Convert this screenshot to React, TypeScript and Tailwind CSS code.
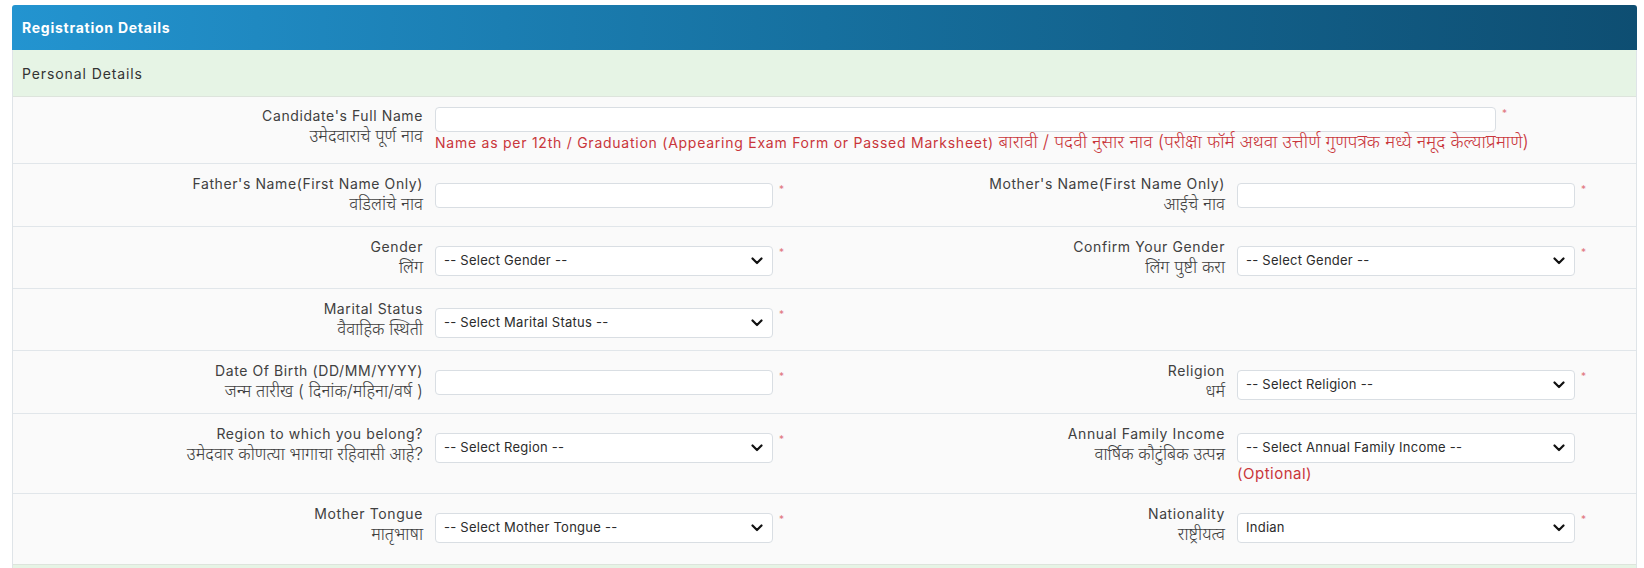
import React from "react";

const FONT = { fontFamily: '"Inter", "Noto Sans", "Noto Sans Devanagari", sans-serif' };

function Chevron() {
  return (
    <svg width="12" height="8" viewBox="0 0 12 8" className="absolute right-[9px] top-1/2 -translate-y-1/2">
      <path d="M1.5 1.5 L6 6 L10.5 1.5" fill="none" stroke="#111" strokeWidth="2.2" strokeLinecap="round" strokeLinejoin="round" />
    </svg>
  );
}

function Star() {
  return <span className="ml-[6px] mt-[1px] text-[10px] leading-none text-[#e0747a]">*</span>;
}

function TextInput({ w = "w-[338px]" }: { w?: string }) {
  return (
    <div className="flex items-start">
      <input className={`${w} h-[25px] rounded-[4px] border border-[#d9dee3] bg-white outline-none`} />
      <Star />
    </div>
  );
}

function Select({ text }: { text: string }) {
  return (
    <div className="flex items-start">
      <div className="relative w-[338px] h-[30px] rounded-[4px] border border-[#d9dee3] bg-white flex items-center pl-[8px] text-[13px] tracking-[0.25px] text-[#2b2b2b]">
        {text}
        <Chevron />
      </div>
      <Star />
    </div>
  );
}

function Label({ en, mr }: { en: string; mr: string }) {
  return (
    <div className="w-[410px] text-right text-[14px] leading-[20px] tracking-[0.6px] text-[#404040]">
      <div>{en}</div>
      <div className="text-[17px] font-light tracking-normal">{mr}</div>
    </div>
  );
}

function Half({ en, mr, children, w = "w-[802px]" }: { en: string; mr: string; children: React.ReactNode; w?: string }) {
  return (
    <div className={`${w} flex items-start`}>
      <div className="pt-[10px]">
        <Label en={en} mr={mr} />
      </div>
      <div className="ml-[12px] pt-[19px]">{children}</div>
    </div>
  );
}

function Row({ children, extra = "" }: { children: React.ReactNode; extra?: string }) {
  return <div className={`flex border-b border-[#e1e6ea] min-h-[62px] ${extra}`}>{children}</div>;
}

export default function App() {
  return (
    <div className="w-[1644px] h-[568px] overflow-hidden bg-white pt-[5px] pl-[12px]" style={FONT}>
      <div className="w-[1625px]">
        <div className="h-[45px] rounded-t-[3px] bg-linear-to-r from-[#2394d0] via-[#16709f] to-[#0e4e72] flex items-center pl-[10px]">
          <span className="text-white font-bold text-[14px] tracking-[0.75px]">Registration Details</span>
        </div>
        <div className="border-x border-[#dfe4e8] bg-[#fafafa]">
          <div className="h-[47px] bg-[#e6f4e5] border-b border-[#dde4dc] flex items-center pl-[9px] text-[14px] tracking-[0.9px] text-[#333]">
            Personal Details
          </div>

          <div className="flex border-b border-[#e1e6ea]">
            <div className="pt-[9px]">
              <Label en="Candidate's Full Name" mr="उमेदवाराचे पूर्ण नाव" />
            </div>
            <div className="ml-[12px] pt-[10px] pb-[10px]">
              <TextInput w="w-[1061px]" />
              <div className="text-[14px] leading-[20px] tracking-[0.75px] text-[#c9363b] whitespace-nowrap">
                Name as per 12th / Graduation (Appearing Exam Form or Passed Marksheet){" "}
                <span className="text-[18px] font-light tracking-normal">बारावी / पदवी नुसार नाव (परीक्षा फॉर्म अथवा उत्तीर्ण गुणपत्रक मध्ये नमूद केल्याप्रमाणे)</span>
              </div>
            </div>
          </div>

          <Row extra="min-h-[63px]">
            <Half en="Father's Name(First Name Only)" mr="वडिलांचे नाव">
              <TextInput />
            </Half>
            <Half en="Mother's Name(First Name Only)" mr="आईचे नाव" w="w-[800px]">
              <TextInput />
            </Half>
          </Row>

          <Row>
            <Half en="Gender" mr="लिंग">
              <Select text="-- Select Gender --" />
            </Half>
            <Half en="Confirm Your Gender" mr="लिंग पुष्टी करा" w="w-[800px]">
              <Select text="-- Select Gender --" />
            </Half>
          </Row>

          <Row>
            <Half en="Marital Status" mr="वैवाहिक स्थिती">
              <Select text="-- Select Marital Status --" />
            </Half>
          </Row>

          <Row extra="min-h-[63px]">
            <Half en="Date Of Birth (DD/MM/YYYY)" mr="जन्म तारीख ( दिनांक/महिना/वर्ष )">
              <TextInput />
            </Half>
            <Half en="Religion" mr="धर्म" w="w-[800px]">
              <Select text="-- Select Religion --" />
            </Half>
          </Row>

          <div className="flex border-b border-[#e1e6ea]">
            <Half en="Region to which you belong?" mr="उमेदवार कोणत्या भागाचा रहिवासी आहे?">
              <Select text="-- Select Region --" />
            </Half>
            <div className="w-[800px] flex items-start">
              <div className="pt-[10px]">
                <Label en="Annual Family Income" mr="वार्षिक कौटुंबिक उत्पन्न" />
              </div>
              <div className="ml-[12px] pt-[19px] pb-[8px]">
                <div className="relative w-[338px] h-[30px] rounded-[4px] border border-[#d9dee3] bg-white flex items-center pl-[8px] text-[13px] tracking-[0.25px] text-[#2b2b2b]">
                  -- Select Annual Family Income --
                  <Chevron />
                </div>
                <div className="text-[15px] leading-[22px] tracking-[0.5px] text-[#c9363b]">(Optional)</div>
              </div>
            </div>
          </div>

          <div className="flex pb-[20px]">
            <Half en="Mother Tongue" mr="मातृभाषा">
              <Select text="-- Select Mother Tongue --" />
            </Half>
            <Half en="Nationality" mr="राष्ट्रीयत्व" w="w-[800px]">
              <Select text="Indian" />
            </Half>
          </div>

          <div className="h-[40px] bg-[#e6f4e5] border-t border-[#dde4dc]"></div>
        </div>
      </div>
    </div>
  );
}
